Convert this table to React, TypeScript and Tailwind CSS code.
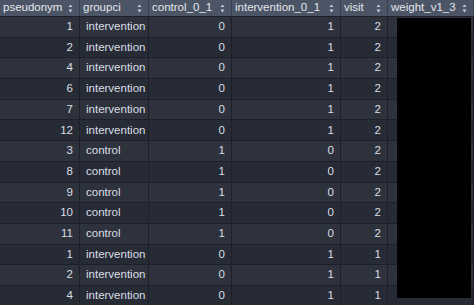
import * as React from 'react';

type Row = [number, string, number, number, number];

const COLS = [
  { key: 'pseudonym', w: 'w-[80px]', align: 'right' },
  { key: 'groupci', w: 'w-[69px]', align: 'left' },
  { key: 'control_0_1', w: 'w-[83px]', align: 'right' },
  { key: 'intervention_0_1', w: 'w-[109px]', align: 'right' },
  { key: 'visit', w: 'w-[47px]', align: 'right' },
  { key: 'weight_v1_3', w: 'flex-1', align: 'right' },
] as const;

const ROWS: Row[] = [
  [1, 'intervention', 0, 1, 2],
  [2, 'intervention', 0, 1, 2],
  [4, 'intervention', 0, 1, 2],
  [6, 'intervention', 0, 1, 2],
  [7, 'intervention', 0, 1, 2],
  [12, 'intervention', 0, 1, 2],
  [3, 'control', 1, 0, 2],
  [8, 'control', 1, 0, 2],
  [9, 'control', 1, 0, 2],
  [10, 'control', 1, 0, 2],
  [11, 'control', 1, 0, 2],
  [1, 'intervention', 0, 1, 1],
  [2, 'intervention', 0, 1, 1],
  [4, 'intervention', 0, 1, 1],
];

function SortIcon() {
  return (
    <svg width="5" height="9" viewBox="0 0 5 9" className="shrink-0">
      <path d="M2.5 0.5 L4.5 3 L0.5 3 Z" fill="#c9ced6" />
      <path d="M0.5 5.5 L4.5 5.5 L2.5 8.5 Z" fill="#c9ced6" />
    </svg>
  );
}

export default function App() {
  return (
    <div
      className="relative h-[305px] w-[474px] overflow-hidden bg-[#2a2e38] text-[11.5px]"
      style={{ fontFamily: '"Liberation Sans", Arial, sans-serif' }}
    >
      {/* header */}
      <div className="flex h-[16px] bg-[#4b5566] text-[#e4e7ec]">
        {COLS.map((c) => (
          <div
            key={c.key}
            className={`${c.w} flex items-center justify-between border-r border-[#39414e] pl-[3px] pr-[6px] leading-none`}
          >
            <span>{c.key}</span>
            <SortIcon />
          </div>
        ))}
      </div>

      {/* body */}
      {ROWS.map((r, i) => (
        <div
          key={i}
          className={`flex h-[20.7px] border-t border-[#1d2028] text-[#dadee5] ${
            i % 2 === 0 ? 'bg-[#2e323d]' : 'bg-[#272b35]'
          }`}
        >
          {COLS.map((c, j) => (
            <div
              key={c.key}
              className={`${c.w} flex items-center border-r border-[#1d2028] leading-none ${
                c.align === 'right' ? 'justify-end pr-[6px]' : 'justify-start pl-[6px]'
              }`}
            >
              {j < 5 ? r[j] : ''}
            </div>
          ))}
        </div>
      ))}

      {/* redacted weight values */}
      <div className="absolute left-[397px] top-[18px] h-[280px] w-[74px] bg-black" />
    </div>
  );
}
